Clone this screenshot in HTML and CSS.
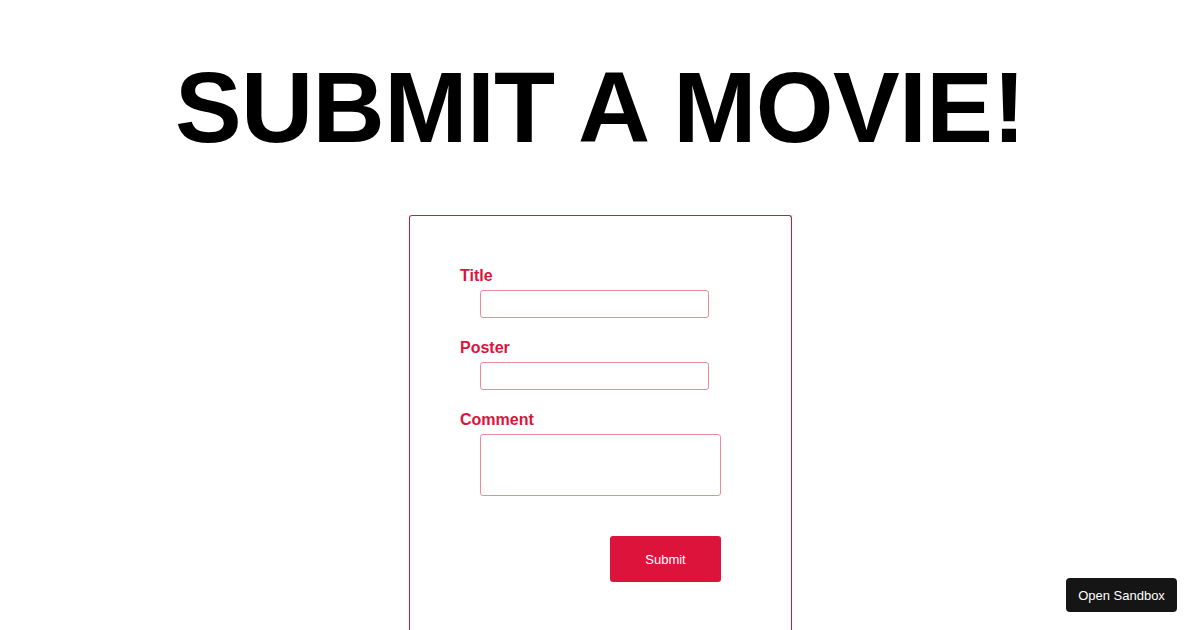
FILE: index.html
```html
<!DOCTYPE html>
<html>
<head>
<meta charset="utf-8">
<link rel="stylesheet" href="styles.css">
</head>
<body>
<h1 class="title">SUBMIT A MOVIE!</h1>
<form class="card">
  <div class="field">
    <label class="label">Title</label>
    <input class="input" type="text">
  </div>
  <div class="field">
    <label class="label">Poster</label>
    <input class="input" type="text">
  </div>
  <div class="field">
    <label class="label">Comment</label>
    <textarea class="textarea"></textarea>
  </div>
  <div class="actions">
    <button class="submit" type="button">Submit</button>
  </div>
</form>
<button class="sandbox" type="button">Open Sandbox</button>
</body>
</html>
```

FILE: styles.css
```css
html, body {
  margin: 0;
  padding: 0;
  background: #fff;
  font-family: "Liberation Sans", Arial, sans-serif;
  height: 630px;
  overflow: hidden;
}
.title {
  margin: 50px 0 0;
  text-align: center;
  font-size: 100px;
  font-weight: bold;
  line-height: 115px;
  letter-spacing: -0.6px;
  color: #000;
}
.card {
  box-sizing: border-box;
  width: 383px;
  height: 415px;
  margin: 50px 0 0 409px;
  border: 1px solid #dc143c;
  border-bottom: 0;
  border-radius: 3px 3px 0 0;
  padding: 50px 50px 0 50px;
}
.field {
  display: flex;
  flex-direction: column;
  align-items: flex-start;
  margin-bottom: 20px;
}
.label {
  font-size: 16px;
  font-weight: bold;
  line-height: 19px;
  color: #dc143c;
}
.input, .textarea {
  box-sizing: border-box;
  margin: 5px 0 0 20px;
  border: 1px solid #ef8a9d;
  border-radius: 3px;
  background: #fff;
  outline: none;
  padding: 0;
}
.input {
  width: 229px;
  height: 28px;
}
.textarea {
  width: 241px;
  height: 62px;
  resize: none;
}
.actions {
  width: 261px;
  display: flex;
  justify-content: flex-end;
  margin-top: 40px;
}
.submit {
  width: 111px;
  height: 46px;
  border: none;
  border-radius: 3px;
  background: #dc143c;
  color: #fff;
  font-family: "Liberation Sans", Arial, sans-serif;
  font-size: 13px;
}
.sandbox {
  position: fixed;
  right: 23px;
  bottom: 18px;
  width: 111px;
  height: 34px;
  border: none;
  border-radius: 4px;
  background: #151515;
  color: #fff;
  font-family: "Liberation Sans", Arial, sans-serif;
  font-size: 13px;
}
```
